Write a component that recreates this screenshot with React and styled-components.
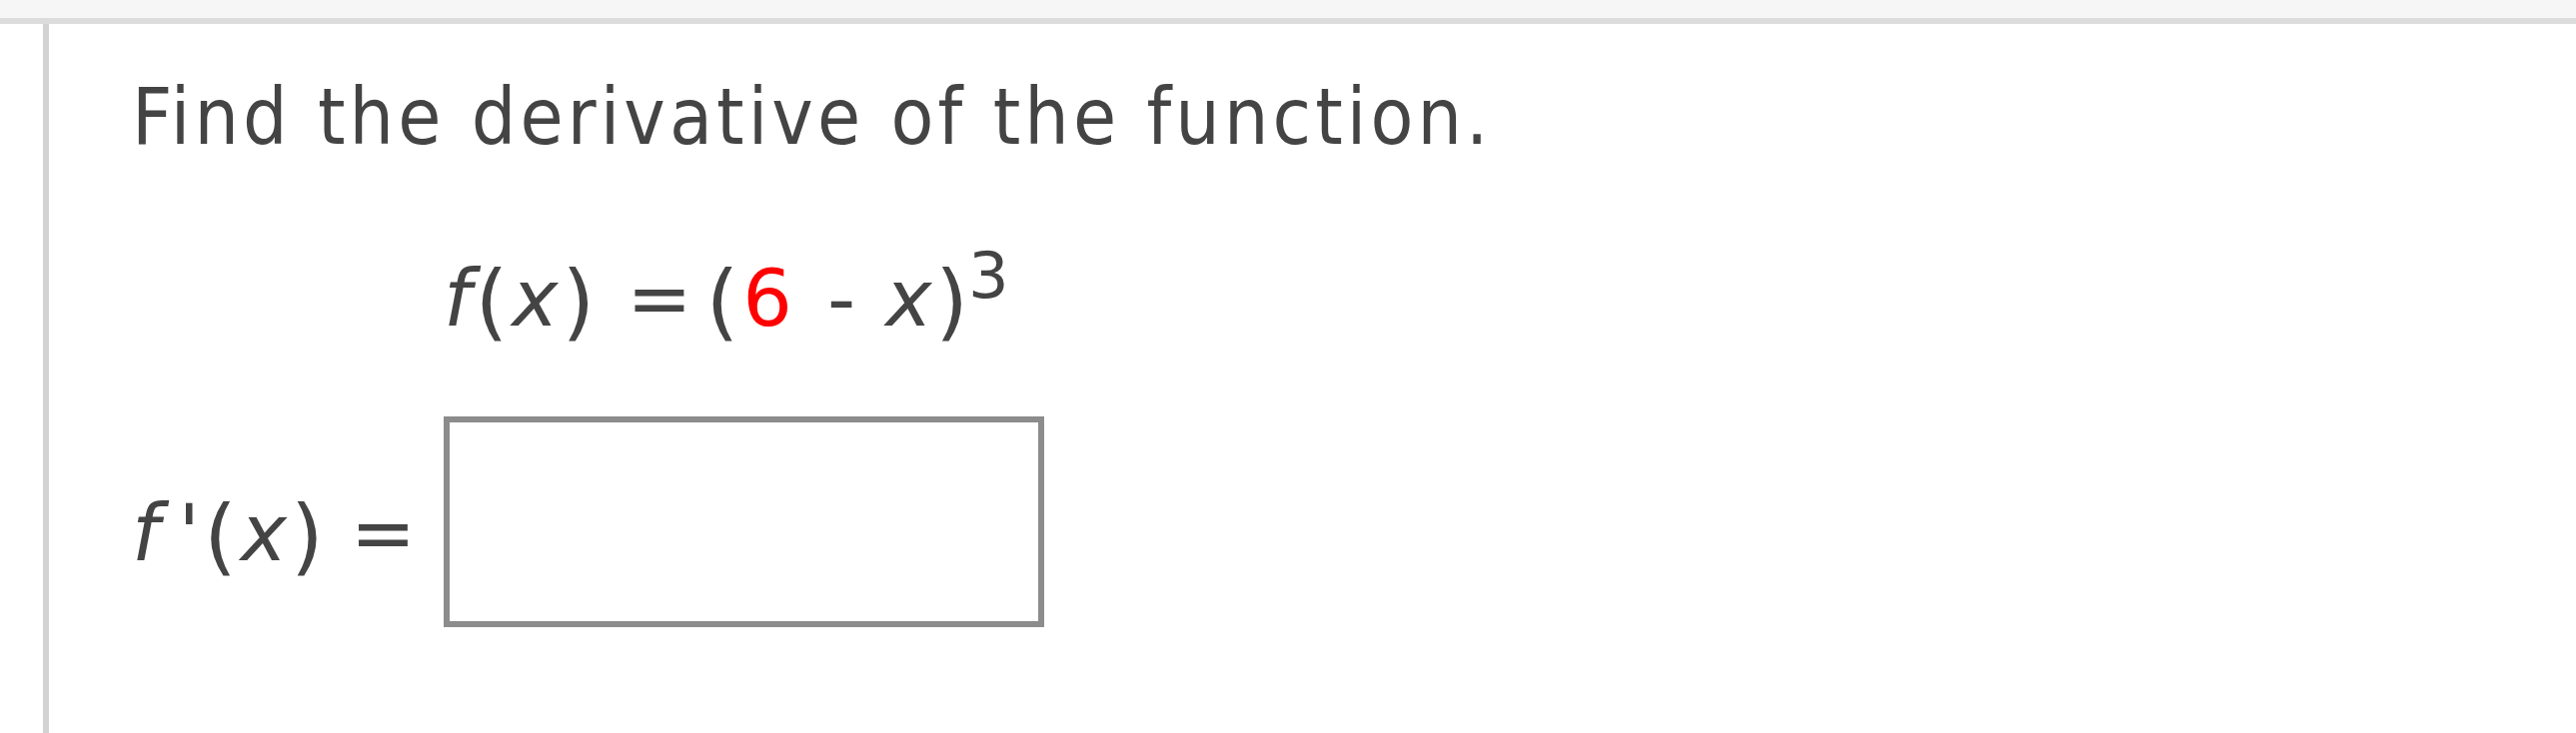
import React from "react";
import styled, { createGlobalStyle } from "styled-components";

const GlobalStyle = createGlobalStyle`
  html, body { margin: 0; padding: 0; background: #ffffff; }
  body { font-family: "DejaVu Sans", Verdana, sans-serif; color: #444444; }
`;

const TopBar = styled.div`
  height: 18px;
  background: #f6f6f6;
  border-bottom: 6px solid #dcdcdc;
`;

const Body = styled.div`
  display: flex;
  min-height: calc(100vh - 24px);
`;

const Gutter = styled.div`
  width: 43px;
  flex: none;
`;

const Panel = styled.main`
  flex: 1;
  border-left: 6px solid #d3d3d3;
  padding: 47px 0 0 83px;
`;

const Heading = styled.div`
  font-family: "DejaVu Sans Condensed", "DejaVu Sans", sans-serif;
  font-stretch: semi-condensed;
  font-size: 78px;
  line-height: 93.6px;
  letter-spacing: 4.1px;
  color: #444444;
`;

const Problem = styled.div`
  display: grid;
  grid-template-columns: 312px auto;
  grid-template-rows: auto auto;
  margin-top: 88px;
  row-gap: 71px;
  justify-content: start;
`;

const MathLine = styled.div`
  font-size: 78px;
  line-height: 93.6px;
  letter-spacing: 4px;
  white-space: nowrap;
  color: #444444;
`;

const Equation = styled(MathLine)`
  grid-column: 2;
`;

const Label = styled(MathLine)`
  grid-column: 1;
  align-self: end;
  padding-bottom: 47px;
`;

const Var = styled.span`
  font-style: italic;
`;

const Paren = styled.span`
  font-size: 84px;
  line-height: 0;
  vertical-align: -5px;
  letter-spacing: ${(p) => (p.$tight ? 0 : 4)}px;
`;

const Gap = styled.span`
  display: inline-block;
  width: ${(p) => p.$w}px;
`;

const Red = styled.span`
  color: #ff0000;
`;

const Sup = styled.span`
  font-size: 64px;
  line-height: 0;
  vertical-align: 28px;
`;

const AnswerBox = styled.div`
  grid-column: 2;
  width: 601px;
  height: 211px;
  box-sizing: border-box;
  border: 6px solid #8c8c8c;
  background: #ffffff;
`;

export default function App() {
  return (
    <>
      <GlobalStyle />
      <TopBar />
      <Body>
        <Gutter />
        <Panel>
          <Heading>Find the derivative of the function.</Heading>
          <Problem>
            <Equation>
              <Var>f</Var>
              <Paren>(</Paren>
              <Var>x</Var>
              <Paren>)</Paren>
              <Gap $w={28} />=<Gap $w={10} />
              <Paren>(</Paren>
              <Red>6</Red>
              <Gap $w={31} />-<Gap $w={26} />
              <Var>x</Var>
              <Paren $tight>)</Paren>
              <Sup>3</Sup>
            </Equation>
            <Label>
              <Var>f</Var>
              <Gap $w={15} />'
              <Paren>(</Paren>
              <Var>x</Var>
              <Paren>)</Paren>
              <Gap $w={23} />=
            </Label>
            <AnswerBox />
          </Problem>
        </Panel>
      </Body>
    </>
  );
}
